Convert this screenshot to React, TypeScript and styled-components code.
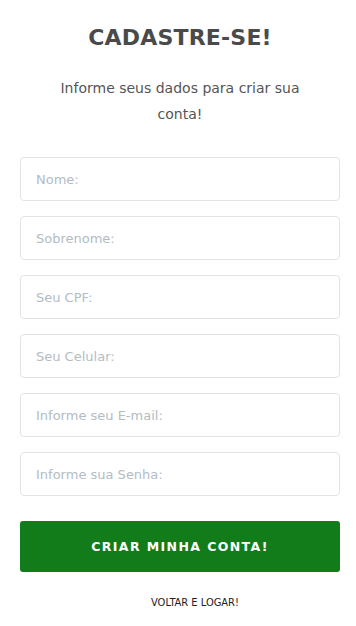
import { createGlobalStyle } from "styled-components";
import styled from "styled-components";

const GlobalStyle = createGlobalStyle`
  body {
    margin: 0;
    background: #fff;
    font-family: "DejaVu Sans", Verdana, sans-serif;
  }
`;

const fields = [
  "Nome:",
  "Sobrenome:",
  "Seu CPF:",
  "Seu Celular:",
  "Informe seu E-mail:",
  "Informe sua Senha:",
];

const App = () => {
  return (
    <>
      <GlobalStyle />
      <Page>
        <Title>CADASTRE-SE!</Title>
        <Subtitle>Informe seus dados para criar sua conta!</Subtitle>
        <Form onSubmit={(e) => e.preventDefault()}>
          {fields.map((f) => (
            <Field key={f} placeholder={f} />
          ))}
          <Submit type="submit">CRIAR MINHA CONTA!</Submit>
        </Form>
        <BackLink href="#">VOLTAR E LOGAR!</BackLink>
      </Page>
    </>
  );
};

const Page = styled.div`
  display: flex;
  flex-direction: column;
  align-items: center;
  padding: 25px 16px 0 20px;
`;

const Title = styled.h1`
  margin: 0;
  font-size: 22px;
  font-weight: bold;
  color: #4a4a4a;
  letter-spacing: 0.2px;
`;

const Subtitle = styled.p`
  margin: 25px 0 0;
  width: 260px;
  text-align: center;
  font-size: 14px;
  line-height: 26px;
  color: #555;
`;

const Form = styled.form`
  margin-top: 30px;
  width: 320px;
  display: flex;
  flex-direction: column;
  gap: 15px;
`;

const Field = styled.input`
  box-sizing: border-box;
  width: 100%;
  height: 44px;
  padding: 0 15px;
  border: 1px solid #e3e3e3;
  border-radius: 4px;
  font-family: "DejaVu Sans", sans-serif;
  font-size: 13px;
  color: #333;
  outline: none;
  &::placeholder {
    color: #b3bcc4;
  }
`;

const Submit = styled.button`
  margin-top: 10px;
  height: 51px;
  border: none;
  border-radius: 3px;
  background: #127c1b;
  color: #fff;
  font-family: "DejaVu Sans", sans-serif;
  font-size: 12.5px;
  font-weight: bold;
  letter-spacing: 1.4px;
  cursor: pointer;
`;

const BackLink = styled.a`
  margin: 24px 0 0 30px;
  font-family: "DejaVu Sans Condensed", "DejaVu Sans", sans-serif;
  font-size: 11px;
  color: #222;
  text-decoration: none;
`;

export default App;
